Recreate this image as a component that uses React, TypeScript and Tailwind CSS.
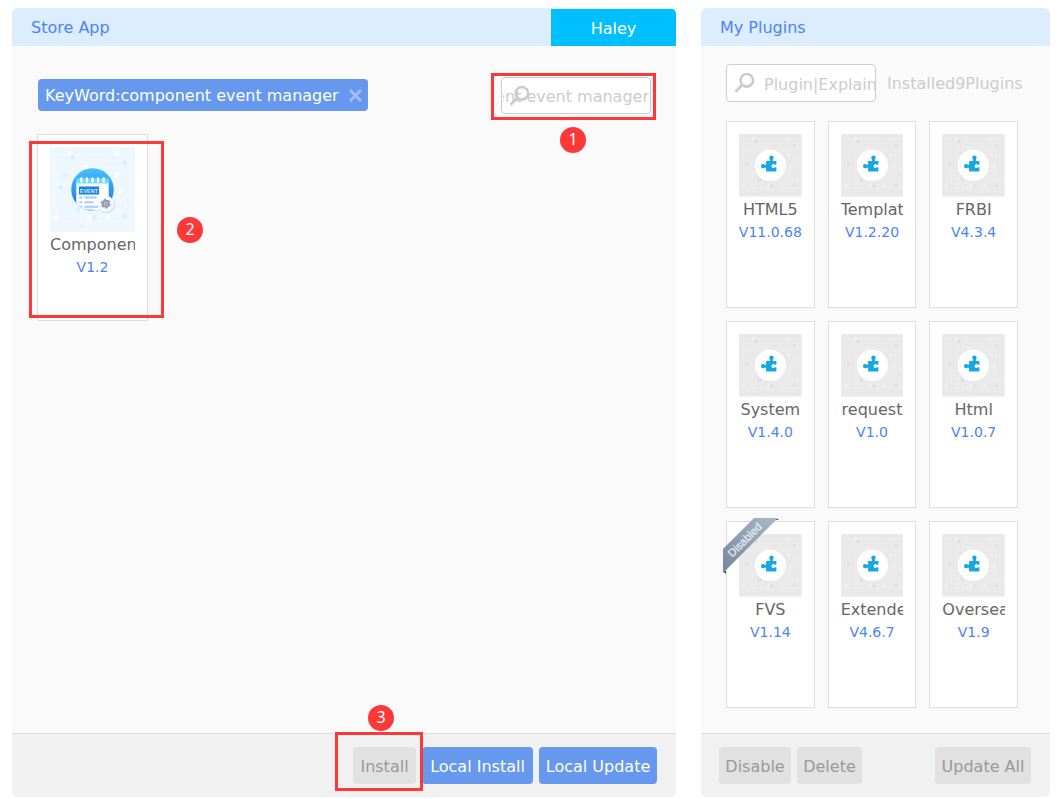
import { useState } from "react";
import type { ReactNode } from "react";

interface Plugin {
  name: string;
  version: string;
  disabled?: boolean;
}

const plugins: Plugin[] = [
  { name: "HTML5", version: "V11.0.68" },
  { name: "Template", version: "V1.2.20" },
  { name: "FRBI", version: "V4.3.4" },
  { name: "System", version: "V1.4.0" },
  { name: "request", version: "V1.0" },
  { name: "Html", version: "V1.0.7" },
  { name: "FVS", version: "V1.14", disabled: true },
  { name: "Extended", version: "V4.6.7" },
  { name: "Overseas", version: "V1.9" },
];

const darkDots = [[15, 6], [53, 10], [6, 28], [19, 44], [31, 50], [53, 49]];
const faintDots = [[9, 19], [44, 19], [56, 38], [22, 56]];
const lightDots = [[13, 3], [47, 3], [25, 13], [47, 19], [50, 31], [27, 50], [3, 50], [41, 50]];

interface DotsProps {
  dark: string;
  faint: string;
  light: string;
}

const Dots = ({ dark, faint, light }: DotsProps) => (
  <>
    {darkDots.map(([x, y]) => (
      <rect key={`d${x}-${y}`} x={x} y={y} width="3" height="3" fill={dark} />
    ))}
    {faintDots.map(([x, y]) => (
      <rect key={`f${x}-${y}`} x={x} y={y} width="3" height="3" fill={faint} />
    ))}
    {lightDots.map(([x, y]) => (
      <rect key={`l${x}-${y}`} x={x} y={y} width="3" height="3" fill={light} />
    ))}
  </>
);

const PuzzleTile = () => (
  <svg viewBox="0 0 62 62" className="w-full block" aria-hidden="true">
    <rect width="62" height="62" fill="#ebebeb" />
    <path
      d="M3 0V62M7 0V62M11 0V62M15 0V62M19 0V62M23 0V62M27 0V62M31 0V62M35 0V62M39 0V62M43 0V62M47 0V62M51 0V62M55 0V62M59 0V62M0 3H62M0 7H62M0 11H62M0 15H62M0 19H62M0 23H62M0 27H62M0 31H62M0 35H62M0 39H62M0 43H62M0 47H62M0 51H62M0 55H62M0 59H62"
      stroke="#e8e8e8"
      strokeWidth="0.6"
    />
    <Dots dark="#dfdfdf" faint="#e6e6e6" light="#f1f1f1" />
    <circle cx="31" cy="31" r="15.5" fill="#fff" />
    <path
      d="M26.800 26.600h3.900v-1.200c0-.6-.8-1-.8-2a2.200 2.200 0 0 1 4.400 0c0 1-.8 1.400-.8 2v1.200H37v3.800h-1.500a1.900 1.900 0 1 0 0 2.600H37V37H26.800v-3.700h-1.200c-.6 0-.9.6-1.800.6a2.100 2.100 0 0 1 0-4.200c.9 0 1.200.7 1.800.7h1.200z"
      fill="#17a8e3"
    />
  </svg>
);

const EventTile = () => (
  <svg viewBox="0 0 84 84" className="w-full block" aria-hidden="true">
    <defs>
      <linearGradient id="disc" x1="0" y1="0" x2="0" y2="1">
        <stop offset="0" stopColor="#45c1fb" />
        <stop offset="1" stopColor="#1c74e4" />
      </linearGradient>
      <clipPath id="discClip">
        <circle cx="42" cy="42" r="21" />
      </clipPath>
    </defs>
    <rect width="84" height="84" fill="#f0f8ff" />
    <path
      d="M5 0V84M11 0V84M17 0V84M23 0V84M29 0V84M35 0V84M41 0V84M47 0V84M53 0V84M59 0V84M65 0V84M71 0V84M77 0V84M0 5H84M0 11H84M0 17H84M0 23H84M0 29H84M0 35H84M0 41H84M0 47H84M0 53H84M0 59H84M0 65H84M0 71H84M0 77H84"
      stroke="#eaf5fe"
      strokeWidth="0.7"
    />
    <g transform="scale(1.355)">
      <Dots dark="#d9eefe" faint="#e4f3fe" light="#ffffff" />
    </g>
    <circle cx="42" cy="42" r="21" fill="url(#disc)" />
    <g clipPath="url(#discClip)">
      <rect x="26" y="34" width="32" height="30" fill="#fff" />
      <path
        d="M29 50h3M34 50h12M29 54.500h3M34 54.500h9M29 59h3M34 59h15M34 62.500h9"
        stroke="#a4cdf8"
        strokeWidth="2"
      />
    </g>
    <rect x="26" y="31" width="32" height="5" fill="#6fd8fb" />
    <path
      d="M31 31v3M36.500 31v3M42 31v3M47.500 31v3M53 31v3"
      stroke="#fff"
      strokeWidth="2.400"
      strokeLinecap="round"
    />
    <rect x="28.500" y="39" width="20" height="8" rx="0.500" fill="#1680e4" />
    <text
      x="38.500"
      y="45.200"
      textAnchor="middle"
      fontSize="5.500"
      fontWeight="bold"
      fontFamily="Liberation Sans, Arial, sans-serif"
      fill="#cfe7ff"
    >
      EVENT
    </text>
    <circle cx="56" cy="57" r="8.500" fill="#b9d4f0" opacity="0.5" />
    <circle cx="55" cy="56" r="7.800" fill="#f7fafd" />
    <circle cx="55" cy="56" r="3.800" fill="#8b9bb0" />
    <circle cx="55" cy="56" r="4.200" fill="none" stroke="#8b9bb0" strokeWidth="1.400" strokeDasharray="2.200 2.200" />
    <circle cx="55" cy="56" r="2" fill="#c3ccd7" />
    <circle cx="55" cy="56" r="0.900" fill="#76879d" />
  </svg>
);

const SearchIcon = () => (
  <svg viewBox="0 0 22 22" className="w-[22px] h-[22px]" fill="none" stroke="#ccc" aria-hidden="true">
    <circle cx="12.800" cy="8.300" r="6.300" strokeWidth="2.600" />
    <path d="M8.500 12.800L1.500 19.800" strokeWidth="2.800" />
  </svg>
);

const DisabledRibbon = () => (
  <svg
    viewBox="0 0 56 56"
    className="absolute -left-1 -top-1 w-14 h-14"
    role="img"
    aria-label="Disabled"
  >
    <defs>
      <linearGradient id="ribbon" x1="0" y1="1" x2="1" y2="0">
        <stop offset="0" stopColor="#75879a" />
        <stop offset="1" stopColor="#a9b9c7" />
      </linearGradient>
    </defs>
    <path d="M0 53h3v3zM53 0l3 2h-3z" fill="#3e4c5c" />
    <path d="M31 0H55L0 55V31z" fill="url(#ribbon)" />
    <text
      transform="translate(24.500 24.500) rotate(-45)"
      textAnchor="middle"
      fontSize="11"
      fontFamily="Liberation Sans, Arial, sans-serif"
      fill="#e4eaf0"
      stroke="#e4eaf0"
      strokeWidth="0.3"
    >
      Disabled
    </text>
  </svg>
);

const PluginCard = ({ plugin, icon }: { plugin: Plugin; icon: ReactNode }) => (
  <article className="relative h-[187px] border border-[#ddd] bg-white p-3 text-center">
    {icon}
    <h3 className="overflow-hidden whitespace-nowrap leading-[26px] text-[#666]">
      {/* names too long for the card are cut at its right edge */}
      <span className="block">{plugin.name}</span>
    </h3>
    <p className="-mx-1 text-sm leading-[18px] text-[#4c84f4]">{plugin.version}</p>
    {plugin.disabled && <DisabledRibbon />}
  </article>
);

const StepBadge = ({ step, className }: { step: number; className: string }) => (
  <span
    className={`absolute z-20 flex h-[26px] w-[26px] justify-center rounded-full bg-[#fd3838] font-['Noto_Sans',sans-serif] leading-6 text-white ${className}`}
  >
    {step}
  </span>
);

const Marker = ({ className }: { className: string }) => (
  <span className={`pointer-events-none absolute z-10 border-3 border-[#fd3838] ${className}`} />
);

interface ButtonProps {
  children: ReactNode;
  className: string;
  disabled?: boolean;
}

const Button = ({ children, className, disabled }: ButtonProps) => (
  <button
    disabled={disabled}
    className={`h-[37px] whitespace-nowrap rounded bg-[#6698ee] pt-0.5 text-white disabled:bg-[#e1e1e1] disabled:text-[#999] ${className}`}
  >
    {children}
  </button>
);

const App = () => {
  const [keyword, setKeyword] = useState("component event manager");
  const [filter, setFilter] = useState("");

  return (
    <div className="flex gap-[25px] bg-white pt-2 pr-2 pb-0.5 pl-3 font-['DejaVu_Sans',Verdana,sans-serif] text-base">
      <section className="flex min-w-0 flex-[664] flex-col overflow-hidden rounded-md bg-[#fafafa]">
        <header className="flex h-[38px] items-end justify-between bg-[#dcedff]">
          <h2 className="pl-[19px] leading-9 text-[#4c84f4]">Store App</h2>
          <button className="h-[37px] w-[125px] bg-[#00bfff] pt-0.5 text-white">Haley</button>
        </header>

        <div className="flex-1 pt-[31px] pr-[25px] pl-[25px]">
          <div className="flex items-start justify-between">
            <div className="mt-0.5 ml-px flex h-8 w-[330px] items-center justify-between rounded bg-[#6698ee] pr-1.5 pl-[7px] text-white">
              <span className="whitespace-nowrap pt-0.5">KeyWord:component event manager</span>
              <button aria-label="Remove keyword" className="text-[#a3bff5]">
                <svg viewBox="0 0 13 13" className="h-[13px] w-[13px]" stroke="currentColor" strokeWidth="2.800">
                  <path d="M1 1L12 12M12 1L1 12" />
                </svg>
              </button>
            </div>
            <div className="relative">
              <input
                dir="rtl"
                aria-label="Search store"
                value={keyword}
                onChange={(e) => setKeyword(e.target.value)}
                className="block h-[37px] w-[150px] rounded border border-[#ccc] bg-white px-px pt-0.5 text-[#ccc] outline-none"
              />
              <span className="pointer-events-none absolute top-2 left-2">
                <SearchIcon />
              </span>
              <Marker className="-top-1 -left-2.5 h-[47px] w-[165px]" />
              <StepBadge step={1} className="top-[50px] left-[59px]" />
            </div>
          </div>

          <div className="relative mt-5 w-[111px]">
            <PluginCard plugin={{ name: "Component", version: "V1.2" }} icon={<EventTile />} />
            <Marker className="top-[7px] -left-2 h-[177px] w-[135px]" />
            <StepBadge step={2} className="top-[83px] left-[140px]" />
          </div>
        </div>

        <footer className="flex justify-end gap-1.5 border-t border-[#ddd] bg-[#f1f1f1] py-[13px] pr-[19px]">
          <div className="relative">
            <Button disabled className="min-w-[63px]">Install</Button>
            <Marker className="-top-[15px] -left-[18px] h-[59px] w-[88px]" />
            <StepBadge step={3} className="-top-[42px] left-[15px]" />
          </div>
          <Button className="min-w-[111px]">Local Install</Button>
          <Button className="min-w-[118px]">Local Update</Button>
        </footer>
      </section>

      <section className="flex min-w-0 flex-[349] flex-col overflow-hidden rounded-md bg-[#fafafa]">
        <header className="h-[38px] bg-[#dcedff] pt-0.5 pl-[19px]">
          <h2 className="leading-9 text-[#4c84f4]">My Plugins</h2>
        </header>

        <div className="flex-1 pt-[18px] pb-[25px] pl-[25px]">
          <div className="flex items-center gap-[11px]">
            <div className="relative">
              <input
                aria-label="Search plugins"
                placeholder="Plugin|Explain"
                value={filter}
                onChange={(e) => setFilter(e.target.value)}
                className="block h-[38px] w-[150px] rounded border border-[#ccc] bg-white pt-0.5 pl-[37px] text-[#ccc] outline-none placeholder:text-[#ccc]"
              />
              <span className="pointer-events-none absolute top-2 left-2">
                <SearchIcon />
              </span>
            </div>
            <span className="whitespace-nowrap pt-0.5 text-[#ccc]">Installed{plugins.length}Plugins</span>
          </div>

          <div className="mt-[19px] mr-8 grid grid-cols-3 gap-[13px]">
            {plugins.map((plugin) => (
              <PluginCard key={plugin.name} plugin={plugin} icon={<PuzzleTile />} />
            ))}
          </div>
        </div>

        <footer className="flex gap-1.5 border-t border-[#ddd] bg-[#f1f1f1] py-[13px] pr-[19px] pl-[18px]">
          <Button disabled className="min-w-[72px]">Disable</Button>
          <Button disabled className="min-w-[65px]">Delete</Button>
          <div className="ml-auto">
            <Button disabled className="min-w-24">Update All</Button>
          </div>
        </footer>
      </section>
    </div>
  );
};

export default App;
